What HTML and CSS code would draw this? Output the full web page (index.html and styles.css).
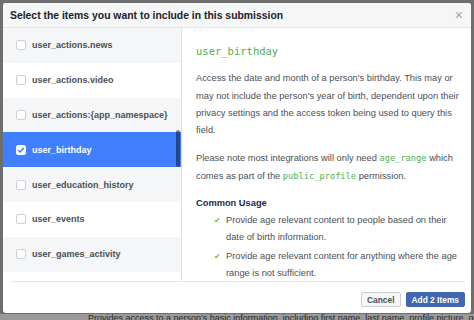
FILE: index.html
```html
<!DOCTYPE html>
<html lang="en">
<head>
    <meta charset="UTF-8">
    <title>Select items</title>
    <link rel="stylesheet" href="styles.css">
</head>
<body>
    <!-- Dialog -->
    <div class="dialog">
        <div class="dialog-header">
            <h2>Select the items you want to include in this submission</h2>
            <span class="close">&times;</span>
        </div>

        <div class="dialog-body">
            <ul class="item-list">
                <li class="item"><span class="box"></span>user_actions.news</li>
                <li class="item"><span class="box"></span>user_actions.video</li>
                <li class="item"><span class="box"></span>user_actions:{app_namespace}</li>
                <li class="item selected">
                    <span class="box">
                        <svg width="8" height="8" viewBox="0 0 8 8"><path d="M1.3 4.2 L3.2 6 L6.8 1.8" fill="none" stroke="#4080ff" stroke-width="1.5"/></svg>
                    </span>user_birthday
                </li>
                <li class="item"><span class="box"></span>user_education_history</li>
                <li class="item"><span class="box"></span>user_events</li>
                <li class="item"><span class="box"></span>user_games_activity</li>
                <li class="item"><span class="box"></span>user_hometown</li>
                <div class="scroll-thumb"></div>
            </ul>

            <div class="details">
                <h3>user_birthday</h3>
                <p>Access the date and month of a person's birthday. This may or may not include the person's year of birth, dependent upon their privacy settings and the access token being used to query this field.</p>
                <p>Please note most integrations will only need <code>age_range</code> which comes as part of the <code>public_profile</code> permission.</p>
                <h4>Common Usage</h4>
                <ul class="usage">
                    <li>Provide age relevant content to people based on their date of birth information.</li>
                    <li>Provide age relevant content for anything where the age range is not sufficient.</li>
                </ul>
            </div>
        </div>

        <div class="dialog-footer">
            <button class="btn-cancel">Cancel</button>
            <button class="btn-add">Add 2 Items</button>
        </div>
    </div>

    <!-- Page behind the dialog -->
    <div class="page-behind">Provides access to a person's basic information, including first name, last name, profile picture, gender and age range.</div>
</body>
</html>
```

FILE: styles.css
```css
/* Global styles */
body {
    margin: 0;
    background: #6e6e6e;
    font-family: 'Liberation Sans', Arial, sans-serif;
    color: #4b4f56;
    height: 320px;
    overflow: hidden;
}

/* Dialog */
.dialog {
    margin: 3px 3px 0 3px;
    height: 310px;
    background: #fff;
    border-radius: 3px;
    display: flex;
    flex-direction: column;
    overflow: hidden;
}

.dialog-header {
    height: 24px;
    flex: none;
    background: #f5f6f7;
    border-bottom: 1px solid #e5e5e5;
    display: flex;
    align-items: center;
    justify-content: space-between;
    padding: 0 8px 0 7px;
}

.dialog-header h2 {
    margin: 0;
    font-size: 10.4px;
    font-weight: bold;
    color: #1d2129;
}

.close {
    color: #a0a4aa;
    font-size: 14px;
    line-height: 1;
}

.dialog-body {
    flex: 1;
    display: flex;
    min-height: 0;
}

/* Item list */
.item-list {
    position: relative;
    width: 178px;
    flex: none;
    margin: 0;
    padding: 0;
    list-style: none;
    border-right: 1px solid #dddfe2;
    overflow: hidden;
}

.item {
    height: 34.8px;
    display: flex;
    align-items: center;
    padding-left: 13px;
    font-size: 9px;
    font-weight: bold;
    color: #4b4f56;
}

.item:nth-child(odd) {
    background: #f5f6f7;
}

.item.selected {
    background: #4080ff;
    color: #fff;
}

.box {
    width: 8px;
    height: 8px;
    border: 1px solid #ccd0d5;
    border-radius: 2px;
    background: #fff;
    margin-right: 6px;
    display: flex;
    align-items: center;
    justify-content: center;
}

.selected .box {
    border-color: #fff;
}

.scroll-thumb {
    position: absolute;
    right: 1px;
    top: 102px;
    width: 4px;
    height: 37px;
    border-radius: 2px;
    background: rgba(0, 0, 0, 0.45);
}

/* Details pane */
.details {
    flex: 1;
    padding: 15px 8px 0 14px;
    font-size: 9.3px;
    line-height: 17.3px;
    color: #4b4f56;
}

.details h3 {
    margin: 0 0 10px 0;
    font-family: 'DejaVu Sans Mono', monospace;
    font-weight: normal;
    font-size: 10.5px;
    color: #4caf50;
}

.details p {
    margin: 0 0 10px 0;
}

.details p + p {
    margin-top: 11px;
}

.details code {
    font-family: 'DejaVu Sans Mono', monospace;
    font-size: 8.7px;
    color: #4caf50;
}

.details h4 {
    margin: 10px 0 1px 0;
    font-size: 9.3px;
    line-height: 16px;
    color: #1c2b4a;
}

.usage {
    margin: 0;
    padding: 0 0 0 30px;
    list-style: none;
}

.usage li {
    position: relative;
    margin-bottom: 1.5px;
}

.usage li::before {
    content: "\2714";
    position: absolute;
    left: -12px;
    color: #6bbf4e;
    font-size: 8px;
}

/* Footer */
.dialog-footer {
    flex: none;
    height: 27px;
    margin: 0 6px 0 8px;
    border-top: 1px solid #e5e5e5;
    display: flex;
    justify-content: flex-end;
    align-items: center;
    gap: 5px;
    padding-top: 4px;
}

.dialog-footer button {
    height: 15px;
    padding: 0 5px;
    font-family: 'Liberation Sans', Arial, sans-serif;
    font-size: 8.4px;
    font-weight: bold;
    border-radius: 2px;
    cursor: pointer;
}

.btn-cancel {
    background: #f5f6f7;
    border: 1px solid #ccd0d5;
    color: #4b4f56;
}

.btn-add {
    background: #4267b2;
    border: 1px solid #4267b2;
    color: #fff;
}

/* Page behind the dialog */
.page-behind {
    margin-top: 1px;
    padding-left: 88px;
    background: #9a9a9a;
    height: 6px;
    font-size: 9px;
    line-height: 9px;
    color: #2a2a2a;
    white-space: nowrap;
    overflow: hidden;
}
```
